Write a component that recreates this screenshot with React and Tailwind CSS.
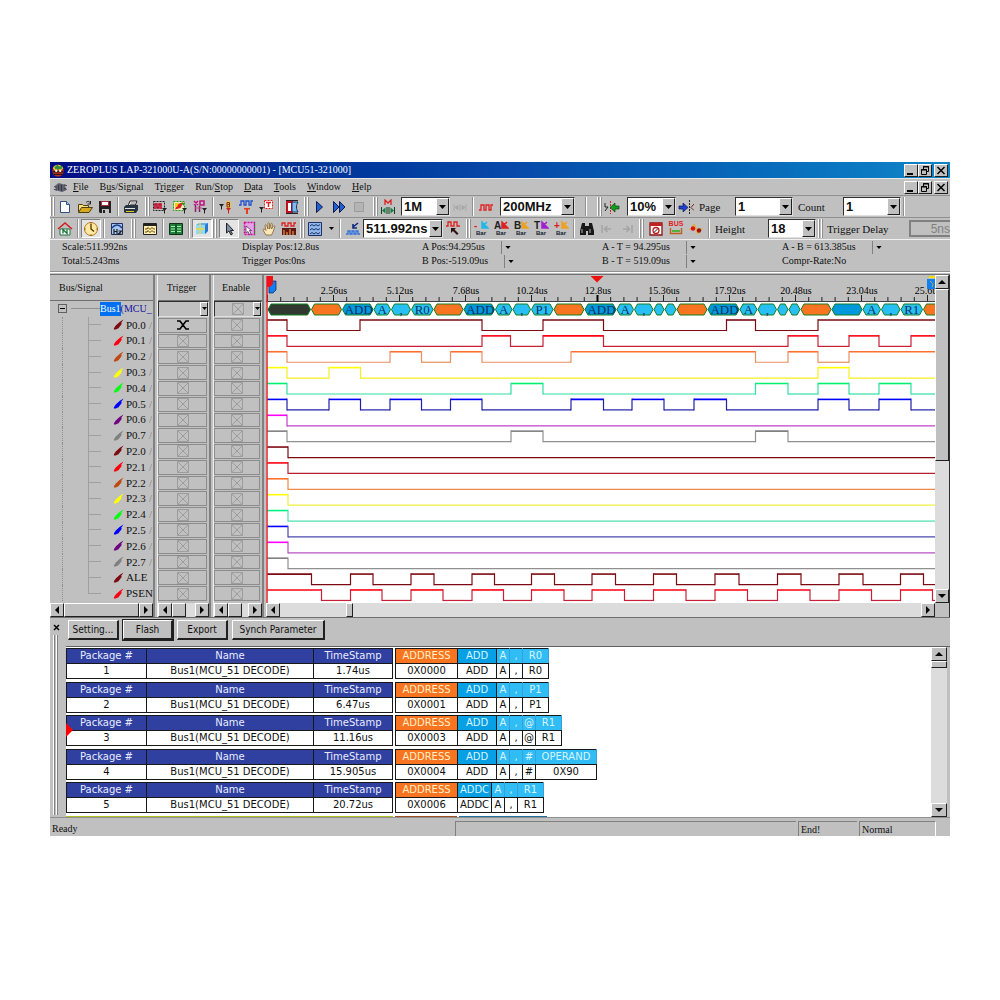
import React from 'react';

const RAISED = 'bg-[#c0c0c0] border border-white border-r-[#202020] border-b-[#202020]';

/* ---------- toolbar icons, 16x16 grid ---------- */

const Icon = ({ children, className = 'w-4 h-4' }) => (
  <svg viewBox="0 0 16 16" className={`${className} block shrink-0`} aria-hidden="true">
    {children}
  </svg>
);

const funnel = (x, y, color = '#202020') => (
  <path d={`M${x} ${y}h5l-2 2.5v3h-1v-3z`} fill={color} />
);

const ICONS = {
  newFile: (
    <>
      <path d="M3.5 2.5h6l3 3v8h-9z" fill="#fff" stroke="#305080" />
      <path d="M9.500 2.500v3h3" fill="#9cf" stroke="#305080" />
    </>
  ),
  open: (
    <>
      <path d="M1.500 13V5.500h4l1 1h5V9" fill="#ffe080" stroke="#504010" />
      <path d="M1.500 13.500l3-5h11l-3.500 5z" fill="#d8a820" stroke="#504010" />
      <path d="M9 3.500c2-2 4-1 4.500 1M13.500 2v3h-3" fill="none" stroke="#222" />
    </>
  ),
  save: (
    <>
      <path d="M2 2h12v12H3l-1-1z" fill="#222" />
      <path d="M4 2h8v5H4z" fill="#b02838" />
      <path d="M5 3h6v3H5z" fill="#fff" />
      <path d="M5 10h7v4H5z" fill="#c0c0c0" />
      <path d="M6 11h2v3H6z" fill="#222" />
    </>
  ),
  print: (
    <>
      <path d="M5 7l2-5h7l-2 5z" fill="#fff" stroke="#222" />
      <path d="M7.500 4h5M7 5.500h5" stroke="#444" strokeWidth=".7" />
      <path d="M1 8l2-2h12v5l-2 3H2l-1-1z" fill="#283440" />
      <path d="M2 9h10v1H2z" fill="#e0e0e0" />
      <path d="M3 12h8v1H3z" fill="#e8c800" />
    </>
  ),
  trigBus: (
    <>
      <path d="M1.500 2.500h11v9h-11z" fill="none" stroke="#222" strokeDasharray="2 1" />
      <path d="M3 10V5h2v4h2V5h2v5" fill="none" stroke="#c00020" strokeWidth="1.500" />
      {funnel(10, 9)}
    </>
  ),
  trigCond: (
    <>
      <path d="M1.500 2.500h11v9h-11z" fill="#f4e8c0" stroke="#20a020" strokeDasharray="2 1" />
      <path d="M3 10.500l2-5 6.500-2.500-3 6z" fill="#e02020" />
      <path d="M3 4h4L5 8H3z" fill="#f0d000" />
      <path d="M9 4h3v3z" fill="#20a020" />
      {funnel(10, 9)}
    </>
  ),
  trigGroup: (
    <>
      <path d="M2 2l4 4M6 2L2 6M8 2h4v4H8z" fill="none" stroke="#c01080" strokeWidth="1.500" />
      <path d="M3.500 6v7M7.500 7v6" stroke="#802060" strokeWidth="1.500" />
      <path d="M3 9h7" stroke="#d04090" />
      {funnel(10, 9)}
    </>
  ),
  trigPos: (
    <>
      <path d="M8 2h5v7H8z" fill="#e8c060" />
      <path d="M9 3.500h2.500v2H9.500h2V8H9z" fill="none" stroke="#803000" />
      {funnel(1, 5, '#202020')}
      {funnel(8, 9, '#d02020')}
    </>
  ),
  trigWave: (
    <>
      <path d="M1 6h2V2h3v4h2V2h3v4h2V2h2" fill="none" stroke="#2050d0" strokeWidth="1.300" />
      <path d="M6 9h6v1.500H10V15H8v-4.500H6z" fill="#e04020" />
    </>
  ),
  trigText: (
    <>
      <path d="M6.500 1.500h8v8h-8z" fill="#fff" stroke="#e02020" strokeDasharray="2 1" />
      <path d="M8 3.500h5M10.500 3v5" stroke="#e02020" strokeWidth="1.500" />
      {funnel(1, 8)}
    </>
  ),
  data: (
    <>
      <path d="M2 2h7v12H2z" fill="#c01020" />
      <path d="M4 4h3v8H4z" fill="#fff" />
      <path d="M8 3h6c-2 3-2 7 0 10H8z" fill="#80b8f0" stroke="#183060" />
      <path d="M2 14.500h12M2 1.500h12" stroke="#222" />
    </>
  ),
  play: <path d="M5.500 2.500v11l6-5.500z" fill="#2060d0" stroke="#101850" />,
  playAll: <path d="M2.500 2.500v11L8 8zM8.500 2.500v11L14 8z" fill="#2060d0" stroke="#101850" />,
  stop: <path d="M3.500 3.500h9v9h-9z" fill="#b4b4b4" stroke="#9c9c9c" />,
  memory: (
    <>
      <path d="M5 6V1l3 3 3-3v5" fill="none" stroke="#e02020" strokeWidth="1.300" />
      <path d="M1.500 8v7M14.500 8v7M7 8v7M9 8v7" stroke="#104020" />
      <path d="M2 11.500l3.500-3v6zM14 11.500l-3.500-3v6z" fill="#108040" />
    </>
  ),
  memoryOff: (
    <path d="M2 5v7M14 5v7M8 5v7M3 8.500l3-2v4zM13 8.500l-3-2v4z" fill="#a8a8a8" stroke="#a8a8a8" />
  ),
  square: <path d="M1 11h2V6h3v5h2V6h3v5h2V6h2" fill="none" stroke="#e02020" strokeWidth="1.300" />,
  zoomIn: (
    <>
      <path d="M1 4v4h3M4 8L1 12" fill="none" stroke="#222" />
      <path d="M6.500 2v13" stroke="#e02020" strokeDasharray="2 1" />
      <path d="M6 8.500L11 4v3h4v3h-4v3z" fill="#10a020" stroke="#104010" strokeWidth=".7" />
    </>
  ),
  zoomOut: (
    <>
      <path d="M10 8.500L5 4v3H1v3h4v3z" fill="#2040d0" stroke="#101850" strokeWidth=".7" />
      <path d="M11.500 1v14" stroke="#222" strokeDasharray="2 1" />
      <path d="M16 5l-3 3.500 3 3" fill="none" stroke="#802020" />
    </>
  ),
  home: (
    <>
      <path d="M3 8h10v6H3z" fill="#fff" stroke="#207040" />
      <path d="M1 8l7-6 7 6" fill="none" stroke="#d02020" strokeWidth="1.600" />
      <path d="M6 12.500V8.500l4 4v-4" fill="none" stroke="#107030" strokeWidth="1.300" />
    </>
  ),
  clock: (
    <>
      <circle cx="8" cy="8" r="6.500" fill="#ffe8a0" stroke="#b07820" />
      <path d="M8 3v5l3 2.500" fill="none" stroke="#503000" strokeWidth="1.300" />
      <path d="M8 1.500v1M8 13.500v1M1.500 8h1M13.500 8h1" stroke="#503000" />
    </>
  ),
  hz: (
    <>
      <path d="M2.500 2.500h11v11h-11z" fill="#a8c8f0" stroke="#203060" />
      <path d="M3 7c3-4 7-4 10 0" fill="none" stroke="#204090" strokeWidth="1.500" />
      <path d="M5 8v5M8 8v5M5 10.500h3M9.500 10h3l-3 3h3" fill="none" stroke="#202020" strokeWidth="1.200" />
    </>
  ),
  waveWin: (
    <>
      <path d="M1.500 2.500h13v11h-13z" fill="#fff0b0" stroke="#222" />
      <path d="M2 3h12v2H2z" fill="#222" />
      <path d="M3 8h2l1-1.500 2 2 2-2 1.500 1.500H13M3 11h2l1-1.500 2 2 2-2 1.500 1.500H13" fill="none" stroke="#604000" />
    </>
  ),
  listWin: (
    <>
      <path d="M1.500 2.500h13v11h-13z" fill="#208040" stroke="#103018" />
      <path d="M3 5.500h4M9 5.500h4M3 8h4M9 8h4M3 10.500h4M9 10.500h4" stroke="#a0f0a0" />
      <path d="M8 3v10" stroke="#103018" />
    </>
  ),
  cube: (
    <>
      <path d="M2 4l3-2h9v8l-3 3H2z" fill="#60b0f0" />
      <path d="M2 4h9v9H2z" fill="#90d8ff" />
      <path d="M6 2v11M2 8h12" stroke="#e8d840" strokeWidth="1.500" />
      <path d="M11 4l3-2v8l-3 3z" fill="#2878d0" />
    </>
  ),
  cursor: <path d="M5.500 2v10l2.500-2 2 4 1.500-1-2-3.500h3z" fill="#8090a8" stroke="#222" />,
  select: (
    <>
      <path d="M3.500 1.500h10v12h-10z" fill="#e8a0e8" stroke="#d010a0" strokeWidth="1.500" strokeDasharray="2 1" />
      <path d="M5 5v7l2-1.500 1.500 3 1.500-1-1.500-3h2z" fill="#fff" stroke="#402040" strokeWidth=".7" />
      <path d="M13.500 2v12" stroke="#208030" strokeDasharray="2 1" />
    </>
  ),
  hand: (
    <path
      d="M5 14L2 9c0-1 1-1.500 2-.5L5 9.500 4 4.500c0-1 1.300-1 1.600 0L7 8V2.500c0-1 1.400-1 1.600 0V8l1.400-5c.4-1 1.600-.6 1.400.5L10.500 8l2-3c.7-.8 1.600 0 1.200 1L12 11l-1.500 3z"
      fill="#ffe8b8"
      stroke="#806030"
      strokeWidth=".8"
    />
  ),
  stats: (
    <>
      <path d="M1 5V2h3v3h3V2h3v3h3V2h2" fill="none" stroke="#e02020" strokeWidth="1.300" />
      <path d="M1 7h14v7H1z" fill="#601810" />
      <path d="M3 14V9M6 14v-3M9 14V8M12 14v-4" stroke="#ffb060" />
    </>
  ),
  grid: (
    <>
      <path d="M1.500 1.500h13v13h-13z" fill="#90b8f0" stroke="#203060" />
      <path d="M3 5l2-1.500 2 1.500 2-1.500L11 5l2-1.500M3 9l2-1.500L7 9l2-1.500L11 9l2-1.500M3 13l2-1.500L7 13l2-1.500 2 1.500 2-1.500" fill="none" stroke="#203060" />
    </>
  ),
  fitWave: (
    <>
      <path d="M13 2L8 6M8 3v4h4" fill="none" stroke="#102880" strokeWidth="1.600" />
      <path d="M1 13h2v-3h2v3h2v-3h2v3h2v-3h2v3h2" fill="none" stroke="#3070e0" strokeWidth="1.300" />
    </>
  ),
  pickWave: (
    <>
      <path d="M1 5h2V1h3v4h3V1h3v4h3" fill="none" stroke="#e02020" strokeWidth="1.300" />
      <path d="M6 7h5L9.500 8.500l4 4-1.500 1.500-4-4L6 12z" fill="#301010" />
    </>
  ),
  binoculars: (
    <>
      <path d="M3 2h3v3h4V2h3l2 8v4H9v-4H7v4H1v-4z" fill="#181818" />
      <path d="M3 8v4M11 8v4" stroke="#b0b0b0" />
    </>
  ),
  prev: <path d="M3 4v8M12 8H6M8.500 5L5.500 8l3 3" fill="none" stroke="#a4a4a4" strokeWidth="1.500" />,
  next: <path d="M13 4v8M4 8h6M7.500 5l3 3-3 3" fill="none" stroke="#a4a4a4" strokeWidth="1.500" />,
  camera: (
    <>
      <path d="M2 2h12v12H2z" fill="#fff" stroke="#901010" strokeWidth="1.300" />
      <path d="M2 2h12v3H2z" fill="#c02020" />
      <circle cx="8" cy="9.500" r="3" fill="none" stroke="#c02020" strokeWidth="1.300" />
      <path d="M6 11.500l4-4" stroke="#222" />
    </>
  ),
  glitch: (
    <>
      <path d="M1 8h3c1-6 3-6 4 0s3 6 4 0h3" fill="none" stroke="#e0b020" strokeWidth="1.200" />
      <circle cx="5" cy="7.500" r="2.200" fill="#e01010" />
      <circle cx="11" cy="9.500" r="2.200" fill="#a01010" />
    </>
  ),
};

const ToolButton = ({ icon, label, pressed }) => (
  <button
    type="button"
    aria-label={label}
    className={`w-5 h-[19px] shrink-0 flex items-center justify-center ${
      pressed ? 'bg-[#e4e4e4] border border-[#808080] border-r-white border-b-white' : ''
    }`}
  >
    <Icon>{ICONS[icon]}</Icon>
  </button>
);

const BarButton = ({ mark, markClass, arrow, label }) => (
  <button type="button" aria-label={label} className="w-5 h-[19px] shrink-0 flex flex-col items-center justify-center">
    <svg viewBox="0 0 16 10" className="w-4 h-[10px] block" aria-hidden="true">
      <path d="M14 2l-4 4M9 2v6h6z" fill={arrow} stroke={arrow} strokeWidth="1.500" />
      <text x="1" y="9" className={`font-['Liberation_Sans'] text-[10px] font-bold ${markClass}`}>{mark}</text>
    </svg>
    <span className="font-['Liberation_Sans',sans-serif] text-[6px] leading-[7px] font-bold text-[#102030]">Bar</span>
  </button>
);

const Sep = () => (
  <span className="w-1.5 shrink-0 flex justify-center self-stretch">
    <span className="w-0.5 border-l border-[#909090] bg-white" />
  </span>
);

const Grip = () => (
  <span className="w-[5px] shrink-0 flex gap-px self-stretch">
    <span className="w-0.5 bg-white border-r border-[#909090]" />
    <span className="w-0.5 bg-white border-r border-[#909090]" />
  </span>
);

const Down = ({ className = 'w-[7px] h-1' }) => (
  <svg viewBox="0 0 7 4" className={`${className} block shrink-0`} aria-hidden="true">
    <path d="M0 0h7L3.500 4z" fill="#000" />
  </svg>
);

const Combo = ({ value, label, className }) => (
  <div className={`relative h-[19px] shrink-0 ${className}`}>
    <select
      aria-label={label}
      className="appearance-none block w-full h-full bg-white border border-[#303030] border-r-[#e0e0e0] border-b-[#e0e0e0] pl-0.5 font-['Liberation_Sans',sans-serif] text-[13px] leading-4 font-bold text-[#101010]"
    >
      <option>{value}</option>
    </select>
    <span className={`absolute right-px top-px bottom-px w-[13px] flex items-center justify-center pointer-events-none ${RAISED}`}>
      <Down />
    </span>
  </div>
);

/* ---------- window chrome ---------- */

const WindowControls = () => (
  <div className="flex pr-0.5">
    <button type="button" aria-label="Minimize" className={`w-[14px] h-[13px] ${RAISED}`}>
      <svg viewBox="0 0 12 11" className="block w-full h-full"><path d="M2 8h6v2H2z" /></svg>
    </button>
    <button type="button" aria-label="Restore" className={`w-[14px] h-[13px] ${RAISED}`}>
      <svg viewBox="0 0 12 11" className="block w-full h-full">
        <path d="M4.500 4V1.500h5v5H8M4 2h6M2.500 4.500h5v5h-5zM2 5h6" fill="none" stroke="#000" />
      </svg>
    </button>
    <button type="button" aria-label="Close" className={`w-[14px] h-[13px] ml-0.5 ${RAISED}`}>
      <svg viewBox="0 0 12 11" className="block w-full h-full">
        <path d="M2.500 2l7 7M9.500 2l-7 7" stroke="#000" strokeWidth="1.500" />
      </svg>
    </button>
  </div>
);

const TitleBar = () => (
  <header className="h-4 flex items-center justify-between bg-linear-to-r from-[#000c84] via-[#0848a8] to-[#1084c8]">
    <div className="flex items-center gap-0.5 pl-px">
      <svg viewBox="0 0 16 16" className="w-[14px] h-[14px] block" aria-hidden="true">
        <circle cx="8" cy="9" r="6.500" fill="#c03020" />
        <path d="M2 6a6.500 6.500 0 0112 0l-3 3-3-2-3 2z" fill="#f0c830" />
        <path d="M4 5l3-3 3 2 3-1-1 4H5z" fill="#309040" />
        <path d="M2 10h12M3 13h10" stroke="#301808" strokeWidth="1.500" />
        <circle cx="6" cy="9" r="1.300" fill="#fff" />
        <circle cx="10.500" cy="9" r="1.300" fill="#fff" />
      </svg>
      <h1 className="text-[10px] leading-4 text-white whitespace-nowrap">
        ZEROPLUS LAP-321000U-A(S/N:00000000001) - [MCU51-321000]
      </h1>
    </div>
    <WindowControls />
  </header>
);

const MENUS = [
  ['', 'F', 'ile'],
  ['B', 'u', 's/Signal'],
  ['T', 'r', 'igger'],
  ['Run/', 'S', 'top'],
  ['', 'D', 'ata'],
  ['', 'T', 'ools'],
  ['', 'W', 'indow'],
  ['', 'H', 'elp'],
];

const MenuBar = () => (
  <nav className="h-[17px] flex items-center justify-between border-t border-[#e8e8e8]">
    <div className="flex items-center pl-[3px]">
      <svg viewBox="0 0 16 12" className="w-[15px] h-[11px] block mr-[5px]" aria-hidden="true">
        <path d="M2 4l4-3 7 2 1 6-4 2-7-2z" fill="#606070" />
        <path d="M1 5l3 1M1 8l3 1M12 3l3 1M12 7l3 1M6 3v6M9 3v7" stroke="#303038" />
      </svg>
      <div className="flex gap-[11px]">
        {MENUS.map(([pre, key, post]) => (
          <button type="button" key={pre + key + post} className="text-[10px] leading-4">
            {pre}<u>{key}</u>{post}
          </button>
        ))}
      </div>
    </div>
    <WindowControls />
  </nav>
);

const MainToolbar = () => (
  <div className="h-[22px] flex items-center border-t border-[#909090] py-px overflow-hidden">
    <Grip />
    <ToolButton icon="newFile" label="New" />
    <ToolButton icon="open" label="Open" />
    <ToolButton icon="save" label="Save" />
    <Sep />
    <ToolButton icon="print" label="Print" />
    <span className="ml-1 flex self-stretch"><Grip /></span>
    <ToolButton icon="trigBus" label="Bus trigger" />
    <ToolButton icon="trigCond" label="Trigger condition" />
    <ToolButton icon="trigGroup" label="Trigger group" />
    <Sep />
    <ToolButton icon="trigPos" label="Trigger position" />
    <ToolButton icon="trigWave" label="Trigger wave" />
    <ToolButton icon="trigText" label="Trigger text" />
    <Sep />
    <ToolButton icon="data" label="Data" />
    <span className="ml-0.5 flex self-stretch"><Grip /></span>
    <ToolButton icon="play" label="Run" />
    <ToolButton icon="playAll" label="Repeat run" />
    <ToolButton icon="stop" label="Stop" />
    <span className="ml-1 flex self-stretch"><Grip /></span>
    <ToolButton icon="memory" label="Memory" />
    <Combo value="1M" label="Memory depth" className="w-[49px] ml-[3px]" />
    <ToolButton icon="memoryOff" label="Memory page" />
    <Sep />
    <ToolButton icon="square" label="Sampling" />
    <Combo value="200MHz" label="Sampling rate" className="w-[75px] ml-1" />
    <span className="ml-2 mr-2 flex self-stretch"><Sep /></span>
    <Grip />
    <ToolButton icon="zoomIn" label="Zoom in" />
    <Combo value="10%" label="Trigger position percent" className="w-[49px] ml-[5px]" />
    <ToolButton icon="zoomOut" label="Zoom out" />
    <span className="w-[39px] shrink-0 pl-[3px] text-[11px] leading-4">Page</span>
    <Combo value="1" label="Page" className="w-[58px]" />
    <span className="w-[50px] shrink-0 pl-[5px] text-[11px] leading-4">Count</span>
    <Combo value="1" label="Count" className="w-[58px]" />
    <Sep />
  </div>
);

const ViewToolbar = () => (
  <div className="h-[22px] flex items-center border-t border-[#909090] py-px overflow-hidden">
    <Grip />
    <ToolButton icon="home" label="Home" />
    <Sep />
    <ToolButton icon="clock" label="Time" pressed />
    <Sep />
    <ToolButton icon="hz" label="Frequency" />
    <span className="mx-1 flex self-stretch"><Grip /></span>
    <ToolButton icon="waveWin" label="Waveform window" />
    <Sep />
    <ToolButton icon="listWin" label="Listing window" />
    <Sep />
    <ToolButton icon="cube" label="Navigator" pressed />
    <span className="mr-0.5 flex self-stretch"><Grip /></span>
    <ToolButton icon="cursor" label="Pointer" pressed />
    <ToolButton icon="select" label="Select" />
    <ToolButton icon="hand" label="Pan" />
    <ToolButton icon="stats" label="Statistics" />
    <span className="ml-px flex self-stretch"><Grip /></span>
    <ToolButton icon="grid" label="Waveform mode" />
    <button type="button" aria-label="Waveform mode menu" className="w-3 shrink-0 flex justify-center">
      <Down className="w-[5px] h-[3px]" />
    </button>
    <Sep />
    <ToolButton icon="fitWave" label="Fit" />
    <Combo value="511.992ns" label="Scale" className="w-[80px]" />
    <ToolButton icon="pickWave" label="Pick" />
    <span className="ml-[3px] flex self-stretch"><Grip /></span>
    <BarButton mark="-" markClass="fill-[#e02020]" arrow="#20b8e8" label="Delete bar" />
    <BarButton mark="A" markClass="fill-[#202020]" arrow="#e02020" label="A bar" />
    <BarButton mark="B" markClass="fill-[#202020]" arrow="#f0a020" label="B bar" />
    <BarButton mark="T" markClass="fill-[#202020]" arrow="#a020d0" label="T bar" />
    <BarButton mark="+" markClass="fill-[#e02020]" arrow="#f0a020" label="Add bar" />
    <Sep />
    <ToolButton icon="binoculars" label="Find" />
    <ToolButton icon="prev" label="Previous" />
    <ToolButton icon="next" label="Next" />
    <span className="mx-0.5 flex self-stretch"><Grip /></span>
    <ToolButton icon="camera" label="Refresh" />
    <button type="button" aria-label="Bus" className="w-5 h-[19px] shrink-0 flex flex-col items-center">
      <span className="font-['Liberation_Sans',sans-serif] text-[7px] leading-[9px] font-bold text-[#e02020]">BUS</span>
      <svg viewBox="0 0 14 7" className="w-[14px] h-[7px] block" aria-hidden="true">
        <path d="M1.500 0v5.500h11V0" fill="none" stroke="#c06020" strokeWidth="1.500" />
        <path d="M3 2h8v2H3z" fill="#50b040" />
      </svg>
    </button>
    <ToolButton icon="glitch" label="Noise filter" />
    <Sep />
    <span className="w-[56px] shrink-0 pl-[3px] text-[11px] leading-4">Height</span>
    <Combo value="18" label="Height" className="w-[48px]" />
    <span className="ml-0.5 flex self-stretch"><Grip /></span>
    <label htmlFor="delay" className="w-[86px] shrink-0 pl-1 text-[11px] leading-4">Trigger Delay</label>
    <input
      id="delay"
      disabled
      defaultValue="5ns"
      className="flex-1 min-w-0 h-[17px] border-2 border-r-0 border-[#808080] bg-[#c0c0c0] text-right font-['Liberation_Sans',sans-serif] text-xs text-[#808080]"
    />
  </div>
);

const READOUTS = [
  [['Scale:511.992ns'], ['Total:5.243ms']],
  [['Display Pos:12.8us'], ['Trigger Pos:0ns']],
  [['A Pos:94.295us', true], ['B Pos:-519.09us', true]],
  [['A - T = 94.295us', true], ['B - T = 519.09us', true]],
  [['A - B = 613.385us', true], ['Compr-Rate:No']],
];

const Readouts = () => (
  <section className="h-[33px] grid grid-cols-5 border-t border-b border-[#909090] border-t-[#f0f0f0] shadow-[0_1px_0_#fff]">
    {READOUTS.map((cell, i) => (
      <div key={i} className="pl-3 min-w-0">
        {cell.map(([text, menu]) => (
          <div key={text} className="h-[14px] flex items-center text-[10px] leading-[14px] whitespace-nowrap">
            {text}
            {menu && (
              <button type="button" aria-label={`${text} source`} className="ml-4 h-[13px] pl-[3px] border-l border-[#808080] flex items-center">
                <Down className="w-1.5 h-[3px]" />
              </button>
            )}
          </div>
        ))}
      </div>
    ))}
  </section>
);

/* ---------- signals ---------- */

// level changes (x of each edge); every trace starts high
const SIGNALS = [
  { name: 'P0.0', color: '#7d0a12', edges: [287, 360, 482, 543, 603.5, 726.500, 755.500, 818] },
  { name: 'P0.1', low: '#c82038', color: '#ff0010', edges: [287, 482, 510.500, 543, 603.500, 788, 818, 849, 879, 911] },
  { name: 'P0.2', low: '#e89060', probe: '#c04810', color: '#ff7030', edges: [287, 390, 421.500, 450.500, 482, 571, 755.500, 788, 818, 849] },
  { name: 'P0.3', low: '#f4f020', color: '#ffff00', edges: [287, 329, 360.500, 818, 849] },
  { name: 'P0.4', low: '#30e0a0', probe: '#00ff10', color: '#00f070', edges: [287, 511, 543, 755.500, 788, 818, 849, 879, 911] },
  { name: 'P0.5', low: '#2020a8', color: '#0000ff', edges: [287, 329, 360.500, 390, 421.500, 450.500, 482, 571, 603.500, 632, 664, 694, 726.500, 818, 849, 879, 911] },
  { name: 'P0.6', low: '#c040c8', probe: '#700080', color: '#ff00ff', edges: [287] },
  { name: 'P0.7', low: '#909090', color: '#808080', edges: [287, 511, 543, 755.500, 788] },
  { name: 'P2.0', color: '#7d0a12', edges: [288] },
  { name: 'P2.1', low: '#b82030', color: '#ff0010', edges: [288] },
  { name: 'P2.2', low: '#f08848', probe: '#c04810', color: '#ff7030', edges: [288] },
  { name: 'P2.3', low: '#f0f040', color: '#ffff00', edges: [288] },
  { name: 'P2.4', low: '#50e0b0', probe: '#00ff10', color: '#00f080', edges: [288] },
  { name: 'P2.5', low: '#4848b0', color: '#0000ff', edges: [288] },
  { name: 'P2.6', low: '#b850c0', probe: '#700080', color: '#ff00ff', edges: [288] },
  { name: 'P2.7', low: '#909090', color: '#808080', edges: [288] },
  {
    name: 'ALE',
    color: '#7d0a12',
    edges: [311.500, 350.500, 373, 411, 434, 472, 494.500, 531.500, 554.500, 592, 615.500, 653.500, 676.500, 715, 739, 777.500, 801, 839, 863, 900.500, 923.500],
  },
  {
    name: 'PSEN',
    low: '#c82038',
    color: '#ff0010',
    edges: [321.500, 350.500, 382, 411, 443, 472, 503.500, 531.500, 564, 592, 624.500, 653.500, 686, 715, 747.500, 777.500, 810, 839, 871.500, 900.500, 932.500],
  },
];

// decoded bus packets: end x, kind, text
const BUS = [
  [311, 'idle'], [342, 'addr'], [373.500, 'op', 'ADD'], [391, 'arg', 'A'], [411, 'arg', ','], [433.500, 'arg', 'R0'],
  [463.500, 'addr'], [495, 'op', 'ADD'], [512.500, 'arg', 'A'], [531, 'arg', ','], [553.500, 'arg', 'P1'],
  [584.500, 'addr'], [616.500, 'op', 'ADD'], [634, 'arg', 'A'], [653.500, 'arg', ','], [664.500, 'arg'], [676.500, 'arg'],
  [707.500, 'addr'], [739.500, 'op', 'ADD'], [757.500, 'arg', 'A'], [777, 'arg', ','], [788.500, 'arg'], [800.500, 'arg'],
  [831.500, 'addr'], [862.500, 'op'], [881, 'arg', 'A'], [900.500, 'arg', ','], [923, 'arg', 'R1'], [954, 'addr'],
];

const BUS_FILL = { idle: '#303830', addr: '#f87420', op: '#0098dc', arg: '#28c0f4' };

const TICKS = ['2.56us', '5.12us', '7.68us', '10.24us', '12.8us', '15.36us', '17.92us', '20.48us', '23.04us', '25.6us'];

const Probe = ({ color }) => (
  <svg viewBox="0 0 12 12" className="w-[11px] h-[11px] block shrink-0" aria-hidden="true">
    <path d="M11.500.5L7.500 3 3 7 1 10v1.500h2l3-1.500 3.500-4.500L9 4z" fill={color} />
  </svg>
);

const Trace = ({ signal, top }) => {
  const { color, edges } = signal;
  const low = signal.low || color;
  const xs = [267, ...edges, 936];
  const hi = top + 4;
  const lo = top + 14.5;
  return (
    <g fill="none">
      {xs.slice(1).map((x, i) =>
        i % 2 === 0 ? (
          <path key={x} d={`M${xs[i]} ${hi}H${x}`} stroke={color} strokeWidth="1.600" />
        ) : (
          <path key={x} d={`M${xs[i]} ${lo}H${x}`} stroke={low} strokeWidth="1.200" />
        )
      )}
      {edges.map((x) => (
        <path key={x} d={`M${x} ${hi - 0.8}V${lo + 0.6}`} stroke={low} strokeWidth="1.200" />
      ))}
    </g>
  );
};

const Waveform = () => (
  <svg viewBox="266 275 669 328" className="block w-[669px] h-[328px]" role="img" aria-label="Waveform">
    <rect x="266" y="275" width="669" height="27" fill="#c0c0c0" />
    <rect x="266" y="302" width="669" height="301" fill="#fff" />
    <path d="M266 301.500h669" stroke="#404048" />
    {Array.from({ length: 51 }, (_, i) => (
      <path key={i} d={`M${267.5 + i * 13.2} ${i % 5 ? 297 : 295}V301`} stroke="#202020" />
    ))}
    {TICKS.map((t, i) => (
      <text key={t} x={334 + i * 66} y="294" textAnchor="middle" className="text-[10px]">{t}</text>
    ))}
    {BUS.map(([end, kind, text], i) => {
      const start = i ? BUS[i - 1][0] : 267.5;
      return (
        <g key={end}>
          <path
            d={`M${start + 0.5} 309.500l3-5.500H${end - 3.5}l3 5.500-3 5.500H${start + 3.500}z`}
            fill={BUS_FILL[kind]}
            stroke="#108020"
          />
          {text && (
            <text
              x={(start + end) / 2 + (kind === 'op' ? 1 : 0)}
              y="314"
              textAnchor="middle"
              className="text-[13px] fill-[#0c3060]"
            >
              {text}
            </text>
          )}
        </g>
      );
    })}
    {SIGNALS.map((s, i) => (
      <Trace key={s.name} signal={s} top={316 + i * 15.88} />
    ))}
    <path d="M267 276v327" stroke="#e02028" strokeWidth="1.500" />
    <path d="M269 281h7v9l-3 3h-4z" fill="#1080f0" stroke="#102060" strokeWidth=".7" />
    <path d="M267 276h6v8l-3 3h-3z" fill="#f01018" />
    <path d="M590.500 276h13l-6.500 6.500z" fill="#f01010" />
    <path d="M597.500 295v7" stroke="#000" strokeWidth="2" />
    <path d="M927 279h8v10h-8z" fill="#1080f0" />
    <path d="M929 276h6v2h-6z" fill="#f0e000" />
    <path d="M930 281c2 2 4 2 2 6" fill="none" stroke="#d0b030" />
  </svg>
);

const Arrow = ({ dir }) => (
  <svg viewBox="0 0 8 8" className="w-2 h-2 block" aria-hidden="true">
    {dir === 'left' && <path d="M6 0v8L2 4z" />}
    {dir === 'right' && <path d="M2 0v8l4-4z" />}
    {dir === 'up' && <path d="M0 6h8L4 2z" />}
    {dir === 'down' && <path d="M0 2h8L4 6z" />}
  </svg>
);

const ScrollButton = ({ dir }) => (
  <button type="button" aria-label={`Scroll ${dir}`} className={`w-[14px] h-[14px] shrink-0 flex items-center justify-center ${RAISED}`}>
    <Arrow dir={dir} />
  </button>
);

const HScroll = ({ before, thumb }) => (
  <div className="h-[14px] flex bg-[#dcdcdc]">
    <ScrollButton dir="left" />
    {before && <span className={before} />}
    <span className={`${thumb} ${RAISED}`} />
    <span className="flex-1" />
    <ScrollButton dir="right" />
  </div>
);

const ColumnHead = ({ children, className = '' }) => (
  <div className={`h-[26px] shrink-0 flex items-center text-[10px] border-b border-[#707070] ${className}`}>{children}</div>
);

const NameColumn = () => (
  <div className="w-[105px] shrink-0 flex flex-col border-r-2 border-[#808080]">
    <ColumnHead className="pl-[9px]">Bus/Signal</ColumnHead>
    <ul className="flex-1 grid auto-rows-fr pb-0.5 text-[11px] leading-[14px]">
      <li className="flex items-center whitespace-nowrap text-[10px]">
        <button type="button" aria-label="Collapse Bus1" className="ml-2 w-[9px] h-[9px] shrink-0 border border-[#606060] flex items-center justify-center">
          <span className="w-[5px] h-px bg-black" />
        </button>
        <span className="ml-1 w-[29px] shrink-0 border-t border-[#909090]" />
        <span className="bg-[#0070f0] text-white">Bus1</span>
        <span className="text-[#1010a0]">(MCU_</span>
      </li>
      {SIGNALS.map((s, i) => (
        <li key={s.name} className="flex items-center whitespace-nowrap">
          <span className="ml-3 w-[26px] self-stretch shrink-0 border-l border-dotted border-[#909090]" />
          <span className="self-stretch w-[13px] shrink-0 flex flex-col">
            <span className="flex-1 border-l border-b border-[#a0a0a0]" />
            <span className={`flex-1 ${i < SIGNALS.length - 1 ? 'border-l border-[#a0a0a0]' : ''}`} />
          </span>
          <span className="ml-3 w-[13px] shrink-0"><Probe color={s.probe || s.color} /></span>
          <span>{s.name}</span>
          {s.name.length < 5 && s.name !== 'PSEN' && s.name !== 'ALE' && (
            <span className="ml-[3px] text-[#808080]">/</span>
          )}
        </li>
      ))}
    </ul>
    <HScroll thumb="w-[76px]" />
  </div>
);

const GhostX = () => (
  <svg viewBox="0 0 12 12" className="w-3 h-3 block" aria-hidden="true">
    <path d="M.5.500h11v11H.5zM1 1l10 10M11 1L1 11" fill="none" stroke="#989898" strokeWidth=".9" />
  </svg>
);

const StateColumn = ({ title, firstSet, width }) => (
  <div className={`${width} shrink-0 flex flex-col border-r-2 border-[#808080] ml-0.5 border-l border-l-[#f0f0f0]`}>
    <ColumnHead className="justify-center pr-1">{title}</ColumnHead>
    <div className="flex-1 grid auto-rows-fr pb-0.5">
      <div className="relative">
        <select aria-label={`${title} for Bus1`} className="appearance-none block absolute inset-0 w-full h-full border border-[#303030] border-r-[#e0e0e0] border-b-[#e0e0e0] bg-[#c0c0c0] text-[10px] leading-none" />
        {!firstSet && <span className="absolute inset-0 flex items-center justify-center pointer-events-none"><GhostX /></span>}
        <span className={`absolute right-px top-px bottom-px w-2 flex items-center justify-center pointer-events-none ${RAISED}`}>
          <Down className="w-[5px] h-[3px]" />
        </span>
      </div>
      {SIGNALS.map((s, i) => (
        <div key={s.name} className="border border-[#8c8c8c] mt-px mr-0.5 flex items-center justify-center overflow-hidden">
          {firstSet && i === 0 ? (
            <svg viewBox="0 0 12 10" className="w-3 h-[10px] block" aria-label="Don't care">
              <path d="M0 1h3l6 8h3M12 1H9L3 9H0" fill="none" stroke="#000" strokeWidth="1.600" />
            </svg>
          ) : (
            <GhostX />
          )}
        </div>
      ))}
    </div>
    <HScroll thumb="w-[14px]" />
  </div>
);

const WavePanel = () => (
  <div className="flex-1 min-w-0 flex flex-col ml-0.5">
    <div className="overflow-hidden flex-1">
      <Waveform />
    </div>
    <HScroll before="w-[66px]" thumb="w-[7px]" />
  </div>
);

const SignalArea = () => (
  <main className="mt-[2px] flex border-t border-b border-[#707070]">
    <NameColumn />
    <StateColumn title="Trigger" firstSet width="w-[54px]" />
    <StateColumn title="Enable" width="w-[51px]" />
    <WavePanel />
    <div className="w-[15px] shrink-0 flex flex-col bg-[#dcdcdc] border-r border-[#303030]">
      <ScrollButton dir="up" />
      <span className={`h-[172px] ${RAISED}`} />
      <span className="flex-1" />
      <ScrollButton dir="down" />
      <span className="h-[14px] bg-[#c0c0c0]" />
    </div>
  </main>
);

/* ---------- packet list ---------- */

const W13 = 'w-[13px]';
const W26 = 'w-[26px]';
const W34 = 'w-[34px]';
const W39 = 'w-[39px]';
const W61 = 'w-[61px]';

const PACKETS = [
  { time: '1.74us', address: '0X0000', parts: [['ADD', W39], ['A', W13], [',', W13], ['R0', W26]] },
  { time: '6.47us', address: '0X0001', parts: [['ADD', W39], ['A', W13], [',', W13], ['P1', W26]] },
  { time: '11.16us', address: '0X0003', parts: [['ADD', W39], ['A', W13], [',', W13], ['@', W13], ['R1', W26]] },
  { time: '15.905us', address: '0X0004', parts: [['ADD', W39], ['A', W13], [',', W13], ['#', W13], ['OPERAND', W61, '0X90']] },
  { time: '20.72us', address: '0X0006', parts: [['ADDC', W34], ['A', W13], [',', W13], ['R1', W26]] },
];

const Th = ({ className, children }) => (
  <th className={`h-[15px] p-0 border border-[#181818] font-normal ${className}`}>{children}</th>
);

const Td = ({ children }) => <td className="h-[15px] p-0 border border-[#181818] bg-white">{children}</td>;

const TABLE = 'table-fixed border-collapse text-center text-[10px] leading-[14px] whitespace-nowrap';

const Packet = ({ number, packet }) => (
  <div className="relative flex items-start gap-0.5">
    <table className={`${TABLE} w-[326px] shrink-0`}>
      <thead>
        <tr className="bg-[#3040a0] text-[#e8ecff]">
          <Th className="w-[80px]">Package #</Th>
          <Th className="w-[167px]">Name</Th>
          <Th className="w-[79px]">TimeStamp</Th>
        </tr>
      </thead>
      <tbody>
        <tr>
          <Td>{number}</Td>
          <Td>Bus1(MCU_51 DECODE)</Td>
          <Td>{packet.time}</Td>
        </tr>
      </tbody>
    </table>
    <table className={`${TABLE} w-0 shrink-0`}>
      <thead>
        <tr className="text-[#d8f4ff]">
          <Th className="w-[62px] bg-[#f87420] text-[#fff0c8]">ADDRESS</Th>
          {packet.parts.map(([text, width], i) => (
            <Th key={text} className={`${width} ${i ? 'bg-[#30bcf4] border-x-[#38a0d8]' : 'bg-[#08a0e4]'}`}>{text}</Th>
          ))}
        </tr>
      </thead>
      <tbody>
        <tr>
          <Td>{packet.address}</Td>
          {packet.parts.map(([text, , value]) => (
            <Td key={text}>{value || text}</Td>
          ))}
        </tr>
      </tbody>
    </table>
    {number === 3 && (
      <svg viewBox="0 0 7 14" className="absolute left-0 top-2 w-[7px] h-[14px]" aria-hidden="true">
        <path d="M0 0v14l7-7z" fill="#ff0000" />
      </svg>
    )}
  </div>
);

const PanelButton = ({ children, className }) => (
  <button
    type="button"
    className={`h-5 font-['DejaVu_Sans_Condensed','DejaVu_Sans',sans-serif] text-[10px] leading-4 border-r-2 border-b-2 ${RAISED} ${className}`}
  >
    {children}
  </button>
);

const PacketPanel = () => (
  <section className="flex pt-px font-['DejaVu_Sans',sans-serif]">
    <div className="w-4 shrink-0 flex flex-col pl-[3px] pb-0.5">
      <button type="button" aria-label="Close panel" className="mt-[5px] w-[7px] h-[7px]">
        <svg viewBox="0 0 7 7" className="block w-full h-full"><path d="M1 1l5 5M6 1L1 6" stroke="#000" strokeWidth="1.500" /></svg>
      </button>
      <span className="mt-1 flex-1 flex gap-px">
        <span className="w-0.5 bg-white border-r border-[#808080]" />
        <span className="w-0.5 bg-white border-r border-[#808080]" />
      </span>
    </div>
    <div className="flex-1 min-w-0">
      <div className="h-[27px] flex items-start gap-1 pl-0.5 pt-px">
        <PanelButton className="w-[51px]">Setting...</PanelButton>
        <PanelButton className="w-[50px] outline outline-[#202020]">Flash</PanelButton>
        <PanelButton className="w-[51px]">Export</PanelButton>
        <PanelButton className="w-[93px]">Synch Parameter</PanelButton>
      </div>
      <div className="flex pr-[3px] border-t border-[#606060]">
        <div className="flex-1 min-w-0 bg-white overflow-hidden pt-px">
          <div className="h-[168px] grid auto-rows-fr">
            {PACKETS.map((p, i) => (
              <Packet key={p.address} number={i + 1} packet={p} />
            ))}
          </div>
          <div className="flex gap-0.5 h-px">
            <span className="w-[327px] bg-[#b0c020]" />
            <span className="w-[62px] bg-[#a05020]" />
            <span className="w-[88px] bg-[#2070a0]" />
          </div>
        </div>
        <div className="w-4 flex flex-col bg-[#dcdcdc] shrink-0">
          <button type="button" aria-label="Scroll up" className={`h-[14px] flex items-center justify-center ${RAISED}`}><Arrow dir="up" /></button>
          <span className={`h-[7px] ${RAISED}`} />
          <span className="flex-1" />
          <button type="button" aria-label="Scroll down" className={`h-[14px] flex items-center justify-center ${RAISED}`}><Arrow dir="down" /></button>
        </div>
      </div>
    </div>
  </section>
);

const StatusBar = () => (
  <footer className="h-[19px] pt-[3px] flex border-t border-[#909090] text-[10px] leading-[15px]">
    <span className="w-[405px] shrink-0 pl-0.5">Ready</span>
    <span className="flex-1 border-l border-t border-[#808080]" />
    <span className="w-[59px] ml-0.5 pl-0.5 border-l border-t border-[#808080]">End!</span>
    <span className="w-[77px] ml-0.5 pl-0.5 border-l border-t border-r border-[#808080] border-r-white">Normal</span>
    <span className="w-[14px]" />
  </footer>
);

export default function App() {
  return (
    <div className="px-[50px] py-[162px] bg-white">
      <div className="bg-[#c0c0c0] text-[#101010] font-['Liberation_Serif',serif]">
        <TitleBar />
        <MenuBar />
        <MainToolbar />
        <ViewToolbar />
        <Readouts />
        <SignalArea />
        <PacketPanel />
        <StatusBar />
      </div>
    </div>
  );
}
